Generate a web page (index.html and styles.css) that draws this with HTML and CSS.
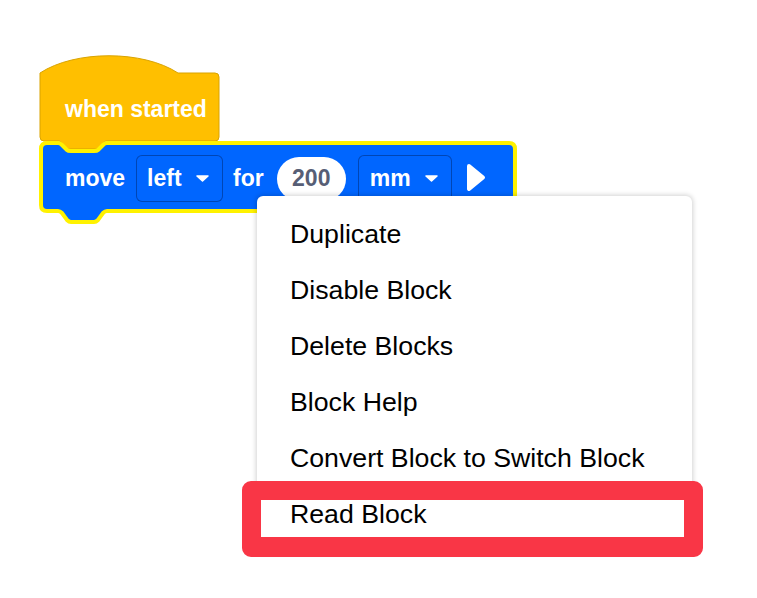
FILE: index.html
```html
<!DOCTYPE html>
<html>
<head>
<meta charset="utf-8">
<link rel="stylesheet" href="styles.css">
</head>
<body>
<div class="workspace">
  <svg class="shapes" width="757" height="598" viewBox="0 0 757 598">
    <path class="hat" d="M40,73 C75,50 143,50 178,73 H215 Q219,73 219,77 V137 Q219,141 215,141 H107 c-2,0 -3,1 -4,2 l-5,5 c-1,1 -2,1 -4,1 h-23 c-2,0 -3,0 -4,-1 l-5,-5 c-1,-1 -2,-2 -4,-2 H44 Q40,141 40,137 Z"/>
    <path class="move" d="M41,149 Q41,143 47,143 H58 c2,0 3,1 4,2 l5,5 c1,1 2,1 4,1 h23 c2,0 3,0 4,-1 l5,-5 c1,-1 2,-2 4,-2 H509 Q515,143 515,149 V205 Q515,211 509,211 H107 c-2,0 -3,1 -4,2 l-5,7 c-1,1 -2,2 -4,2 h-23 c-2,0 -3,-1 -4,-2 l-5,-7 c-1,-1 -2,-2 -4,-2 H47 Q41,211 41,205 Z"/>
  </svg>

  <div class="block block-hat">
    <span class="label">when started</span>
  </div>

  <div class="block block-move">
    <span class="label label-move">move</span>
    <span class="chip chip-left"><span class="label">left</span><svg class="arrow" width="13" height="7" viewBox="0 0 13 7"><path d="M1,1 H12 L6.5,6 Z"/></svg></span>
    <span class="label label-for">for</span>
    <span class="oval">200</span>
    <span class="chip chip-mm"><span class="label">mm</span><svg class="arrow" width="13" height="7" viewBox="0 0 13 7"><path d="M1,1 H12 L6.5,6 Z"/></svg></span>
    <svg class="play" width="20" height="29" viewBox="0 0 20 29"><polygon points="2,2 16,13.5 2,25"/></svg>
  </div>

  <div class="menu">
    <div class="item">Duplicate</div>
    <div class="item">Disable Block</div>
    <div class="item">Delete Blocks</div>
    <div class="item">Block Help</div>
    <div class="item">Convert Block to Switch Block</div>
    <div class="item">Read Block</div>
  </div>

  <div class="highlight"></div>
</div>
</body>
</html>
```

FILE: styles.css
```css
html, body {
  margin: 0;
  padding: 0;
  background: #ffffff;
}

.workspace {
  position: relative;
  width: 757px;
  height: 598px;
  overflow: hidden;
  font-family: "Liberation Sans", Arial, sans-serif;
}

.shapes {
  position: absolute;
  left: 0;
  top: 0;
}

.hat {
  fill: #ffbf00;
  stroke: #d9a300;
  stroke-width: 1;
}

.move {
  fill: #0066ff;
  stroke: #fff200;
  stroke-width: 4;
}

.block {
  position: absolute;
  display: flex;
  align-items: center;
  color: #ffffff;
  font-weight: bold;
  font-size: 23px;
}

.block-hat {
  left: 40px;
  top: 75px;
  height: 68px;
  padding-left: 25px;
}

.block-move {
  left: 43px;
  top: 146px;
  height: 65px;
  padding-left: 22px;
}

.label {
  white-space: nowrap;
}

.label-move {
  margin-right: 11px;
}

.chip {
  box-sizing: border-box;
  height: 47px;
  display: flex;
  align-items: center;
  justify-content: space-between;
  border: 1px solid rgba(0, 30, 90, 0.45);
  border-radius: 6px;
  background: #0066ff;
}

.chip-left {
  width: 87px;
  padding: 0 13px 0 10px;
  margin-right: 10px;
}

.chip-mm {
  width: 94px;
  padding: 0 13px 0 11px;
  margin-right: 15px;
}

.arrow path {
  fill: #ffffff;
  stroke: #ffffff;
  stroke-width: 1.5;
  stroke-linejoin: round;
}

.label-for {
  margin-right: 13px;
}

.oval {
  box-sizing: border-box;
  width: 69px;
  height: 44px;
  border-radius: 22px;
  background: #ffffff;
  color: #575e75;
  display: flex;
  align-items: center;
  justify-content: center;
  margin-right: 12px;
}

.play polygon {
  fill: #ffffff;
  stroke: #ffffff;
  stroke-width: 4;
  stroke-linejoin: round;
}

.menu {
  position: absolute;
  left: 257px;
  top: 196px;
  width: 435px;
  box-sizing: border-box;
  padding: 10px 0;
  background: #ffffff;
  border-radius: 6px;
  box-shadow: 0 0 5px 1px rgba(0, 0, 0, 0.18);
}

.item {
  height: 56px;
  line-height: 56px;
  padding-left: 33px;
  font-size: 26.7px;
  color: #000000;
  white-space: nowrap;
}

.highlight {
  position: absolute;
  left: 242px;
  top: 481px;
  width: 423px;
  height: 37px;
  border: 19px solid #f93646;
  border-bottom-width: 20px;
  border-radius: 9px;
}
```
